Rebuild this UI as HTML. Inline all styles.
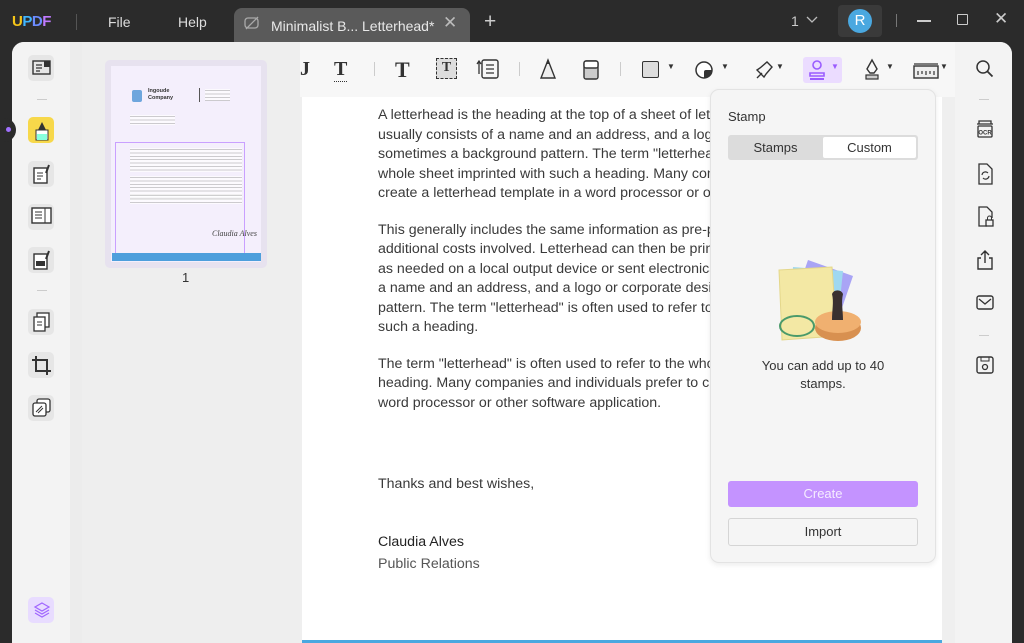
<!DOCTYPE html>
<html><head><meta charset="utf-8"><style>
*{margin:0;padding:0;box-sizing:border-box}
body{width:1024px;height:643px;overflow:hidden;background:#2b2b2b;font-family:"Liberation Sans","DejaVu Sans",sans-serif;position:relative}
.a{position:absolute}
.ib{position:absolute;width:26px;height:26px;border-radius:5px;background:#e6e6e6;left:28px}
.doc p{font-size:14.2px;color:#3a3a3a;line-height:19.5px;white-space:nowrap}
.rs svg{position:absolute;left:975px}
.tl{position:absolute;height:52px;background:repeating-linear-gradient(#fff 0 1px,#bbb 1px 2px,#fff 2px 3.4px);opacity:.7}
</style></head><body>
<div class="a" style="left:12px;top:13px;font-weight:bold;font-size:15px;letter-spacing:-.5px"><span style="color:#f5c518">U</span><span style="color:#3fb5ff">P</span><span style="color:#6c8cff">D</span><span style="color:#c07aff">F</span></div>
<div class="a" style="left:76px;top:14px;width:1px;height:16px;background:#555"></div>
<div class="a" style="left:108px;top:14px;color:#ddd;font-size:14px">File</div>
<div class="a" style="left:178px;top:14px;color:#ddd;font-size:14px">Help</div>
<div class="a" style="left:234px;top:8px;width:236px;height:34px;background:#5a5a5a;border-radius:8px 8px 0 0"></div>
<svg class="a" style="left:244px;top:16px" width="16" height="14"><rect x="1" y="2" width="13" height="10" rx="3" fill="none" stroke="#aaa" stroke-width="1.3"/><line x1="2" y1="13" x2="14" y2="1" stroke="#aaa" stroke-width="1.3"/></svg>
<div class="a" style="left:271px;top:18px;color:#e8e8e8;font-size:14px">Minimalist B... Letterhead*</div>
<div class="a" style="left:443px;top:13px;color:#bbb;font-size:17px">✕</div>
<div class="a" style="left:484px;top:10px;color:#ccc;font-size:21px;font-weight:300">+</div>
<div class="a" style="left:791px;top:13px;color:#ccc;font-size:14px">1</div>
<svg class="a" style="left:806px;top:16px" width="12" height="8"><path d="M1 1l5 5 5-5" fill="none" stroke="#bbb" stroke-width="1.3"/></svg>
<div class="a" style="left:838px;top:5px;width:44px;height:32px;background:#3a3a3a;border-radius:4px"></div>
<div class="a" style="left:848px;top:9px;width:24px;height:24px;border-radius:50%;background:#4aa8e0;color:#fff;font-size:15px;text-align:center;line-height:24px">R</div>
<div class="a" style="left:896px;top:14px;width:1px;height:13px;background:#777"></div>
<div class="a" style="left:917px;top:20px;width:14px;height:1.5px;background:#ccc"></div>
<div class="a" style="left:957px;top:14px;width:11px;height:11px;border:1.4px solid #ccc;border-radius:1px"></div>
<div class="a" style="left:994px;top:9px;color:#ccc;font-size:17px">✕</div>
<div class="a" style="left:12px;top:42px;width:1000px;height:601px;background:#efefef;border-radius:12px 12px 0 0;overflow:hidden">
 <div class="a" style="left:0;top:0;width:58px;height:601px;background:#f3f3f3"></div>
 <div class="a" style="left:58px;top:0;width:12px;height:601px;background:#ececec"></div>
 <div class="a" style="left:70px;top:0;width:218px;height:601px;background:#eeeeee"></div>
 <div class="a" style="left:288px;top:0;width:655px;height:55px;background:#f7f7f7"></div>
 <div class="a" style="left:290px;top:55px;width:640px;height:546px;background:#fff"></div>
 <div class="a" style="left:290px;top:598px;width:640px;height:3px;background:#4aa8e0"></div>
 <div class="a" style="left:943px;top:0;width:57px;height:601px;background:#f3f3f3"></div>
</div>
<div class="a" style="left:1012px;top:42px;width:12px;height:601px;background:#2b2b2b"></div>
<div class="a" style="left:0;top:118px;width:16px;height:24px;background:#2b2b2b;border-radius:0 12px 12px 0"></div>
<div class="a" style="left:6px;top:127px;width:5px;height:5px;border-radius:50%;background:#a070ff"></div>
<div class="ib" style="top:55px"></div>
<svg class="a" style="left:32px;top:60px" width="20" height="16"><rect x="1" y="1" width="17" height="13" fill="none" stroke="#333" stroke-width="1.4"/><path d="M4 5h6M4 8h6M4 11h4" stroke="#333" stroke-width="1.3"/><rect x="12" y="1" width="6" height="6" fill="#333"/></svg>
<div class="a" style="left:37px;top:99px;width:10px;height:1px;background:#ccc"></div>
<div class="ib" style="top:117px;background:#f7d84a"></div>
<svg class="a" style="left:33px;top:120px" width="18" height="22"><path d="M5 10l4-8 4 8z" fill="#333"/><rect x="3" y="10" width="12" height="10" fill="#fff" stroke="#333"/><rect x="4" y="14" width="10" height="6" fill="#8fd"/></svg>
<div class="ib" style="top:161px"></div>
<svg class="a" style="left:32px;top:163px" width="20" height="22"><rect x="2" y="5" width="13" height="15" fill="#fff" stroke="#333" stroke-width="1.4"/><path d="M5 10h6M5 13h6M5 16h4" stroke="#333"/><path d="M17 2l-3 8" stroke="#333" stroke-width="2"/></svg>
<div class="ib" style="top:204px"></div>
<svg class="a" style="left:31px;top:207px" width="22" height="18"><rect x="1" y="1" width="19" height="15" fill="#fff" stroke="#333" stroke-width="1.4"/><path d="M4 5h7M4 8h7M4 11h7M14 1v15" stroke="#333"/></svg>
<div class="ib" style="top:247px"></div>
<svg class="a" style="left:32px;top:249px" width="20" height="22"><rect x="2" y="5" width="13" height="15" fill="#fff" stroke="#333" stroke-width="1.4"/><rect x="4" y="12" width="9" height="5" fill="#333"/><path d="M17 2l-3 8" stroke="#333" stroke-width="2"/></svg>
<div class="a" style="left:37px;top:290px;width:10px;height:1px;background:#ccc"></div>
<div class="ib" style="top:309px"></div>
<svg class="a" style="left:32px;top:312px" width="20" height="20"><rect x="5" y="1" width="12" height="14" fill="#fff" stroke="#333" stroke-width="1.3"/><rect x="2" y="5" width="11" height="14" fill="#fff" stroke="#333" stroke-width="1.3"/><path d="M5 10h5M5 13h5" stroke="#333"/></svg>
<div class="ib" style="top:352px"></div>
<svg class="a" style="left:31px;top:355px" width="22" height="22"><path d="M5 1v15h15M1 5h15v15" fill="none" stroke="#333" stroke-width="2"/></svg>
<div class="ib" style="top:395px"></div>
<svg class="a" style="left:32px;top:398px" width="20" height="20"><rect x="5" y="1" width="13" height="13" rx="2" fill="#fff" stroke="#333" stroke-width="1.3"/><rect x="1" y="5" width="13" height="13" rx="2" fill="#fff" stroke="#333" stroke-width="1.3"/><path d="M4 14l6-6M6 15l5-5" stroke="#333"/></svg>
<div class="ib" style="top:597px;background:#e8dcff"></div>
<svg class="a" style="left:33px;top:601px" width="18" height="18"><path d="M9 2l7 4-7 4-7-4z M2 9l7 4 7-4 M2 12l7 4 7-4" fill="none" stroke="#a066ff" stroke-width="1.2"/></svg>
<div class="a" style="left:105px;top:60px;width:162px;height:208px;background:#e7e2ef;border-radius:5px"></div>
<div class="a" style="left:111px;top:66px;width:150px;height:196px;background:#f4effc"></div>
<div class="a" style="left:132px;top:90px;width:10px;height:12px;background:#6ea6dd;border-radius:2px"></div>
<div class="a" style="left:148px;top:88px;font-size:5.5px;font-weight:bold;color:#333;line-height:7px">Ingoude<br>Company</div>
<div class="a" style="left:199px;top:88px;width:1px;height:14px;background:#555"></div>
<div class="tl" style="left:205px;top:89px;width:25px;height:12px"></div>
<div class="tl" style="left:130px;top:115px;width:45px;height:10px"></div>
<div class="a" style="left:115px;top:142px;width:130px;height:118px;border:1px solid #c9a0ff"></div>
<div class="tl" style="left:130px;top:148px;width:112px;height:24px"></div>
<div class="tl" style="left:130px;top:176px;width:112px;height:24px"></div>
<div class="tl" style="left:130px;top:194px;width:112px;height:10px"></div>
<div class="a" style="left:212px;top:229px;font:italic 8px 'Liberation Serif',serif;color:#444">Claudia Alves</div>
<div class="a" style="left:112px;top:253px;width:149px;height:8px;background:#4d9fdc"></div>
<div class="a" style="left:182px;top:270px;font-size:13px;color:#333">1</div>
<div class="a" style="left:300px;top:58px;font:bold 20px 'Liberation Serif',serif;color:#333">J</div>
<div class="a" style="left:334px;top:58px;font:bold 20px 'Liberation Serif',serif;color:#333;border-bottom:1px dotted #333">T</div>
<div class="a" style="left:374px;top:62px;width:1px;height:14px;background:#ccc"></div>
<div class="a" style="left:395px;top:57px;font:bold 22px 'Liberation Serif',serif;color:#333">T</div>
<div class="a" style="left:436px;top:58px;width:21px;height:21px;border:1.4px dashed #333;background:#ddd;font:bold 14px 'Liberation Serif',serif;text-align:center;line-height:18px;color:#333">T</div>
<svg class="a" style="left:476px;top:58px" width="24" height="22"><rect x="6" y="2" width="16" height="18" rx="2" fill="none" stroke="#333" stroke-width="1.4"/><path d="M10 7h8M10 11h8M10 15h8M3 16V4M1 6l2-3 2 3" fill="none" stroke="#333" stroke-width="1.3"/></svg>
<div class="a" style="left:519px;top:62px;width:1px;height:14px;background:#ccc"></div>
<svg class="a" style="left:538px;top:58px" width="20" height="22"><path d="M10 2L3 20h14z" fill="#eee" stroke="#333" stroke-width="1.4"/><path d="M8 6h4l-2-4z" fill="#333"/></svg>
<svg class="a" style="left:582px;top:59px" width="18" height="22"><rect x="2" y="2" width="14" height="18" rx="2" fill="#ccc" stroke="#333" stroke-width="1.4"/><rect x="2" y="2" width="14" height="7" rx="2" fill="#fff" stroke="#333" stroke-width="1.4"/></svg>
<div class="a" style="left:620px;top:62px;width:1px;height:14px;background:#ccc"></div>
<div class="a" style="left:642px;top:61px;width:17px;height:17px;border:1.5px solid #333;background:#ddd;border-radius:2px"></div>
<svg class="a" style="left:694px;top:60px" width="40" height="20"><circle cx="10" cy="10" r="8" fill="#fff" stroke="#333" stroke-width="1.5"/><path d="M10 18a8 8 0 0 0 8-8h-6a2 2 0 0 0-2 2z" fill="#333"/></svg>
<svg class="a" style="left:752px;top:60px" width="24" height="20"><path d="M5 18l5-5M8 8l7-6 5 5-6 7-2 3-7-7z" fill="none" stroke="#333" stroke-width="1.4"/></svg>
<div class="a" style="left:803px;top:57px;width:39px;height:26px;background:#ebdcff;border-radius:3px"></div>
<svg class="a" style="left:806px;top:59px" width="22" height="22"><circle cx="11" cy="6" r="4" fill="none" stroke="#9a5cff" stroke-width="1.6"/><path d="M4 14h14v3H4z" fill="none" stroke="#9a5cff" stroke-width="1.6"/><rect x="4" y="19" width="14" height="2" fill="#9a5cff"/></svg>
<svg class="a" style="left:862px;top:58px" width="20" height="24"><path d="M10 2l-5 9 3 4h4l3-4z" fill="none" stroke="#333" stroke-width="1.4"/><rect x="4" y="17" width="12" height="4" fill="#ccc" stroke="#333" stroke-width="1.2"/></svg>
<svg class="a" style="left:913px;top:62px" width="26" height="18"><rect x="1" y="4" width="24" height="12" fill="#eee" stroke="#333" stroke-width="1.4"/><path d="M1 2h24M5 9v4M9 9v3M13 9v4M17 9v3M21 9v4" stroke="#333" stroke-width="1.2"/></svg>
<div class="a" style="left:667px;top:62px;font-size:8px;color:#333">▼</div>
<div class="a" style="left:721px;top:62px;font-size:8px;color:#333">▼</div>
<div class="a" style="left:776px;top:62px;font-size:8px;color:#333">▼</div>
<div class="a" style="left:831px;top:62px;font-size:8px;color:#9a5cff">▼</div>
<div class="a" style="left:886px;top:62px;font-size:8px;color:#333">▼</div>
<div class="a" style="left:940px;top:62px;font-size:8px;color:#333">▼</div>
<div class="a doc" style="left:378px;top:106px">
<p>A letterhead is the heading at the top of a sheet of letter</p>
<p>usually consists of a name and an address, and a logo or</p>
<p>sometimes a background pattern. The term "letterhead" is</p>
<p>whole sheet imprinted with such a heading. Many companie</p>
<p>create a letterhead template in a word processor or other</p>
<p style="margin-top:17px">This generally includes the same information as pre-printed</p>
<p>additional costs involved. Letterhead can then be printed o</p>
<p>as needed on a local output device or sent electronically</p>
<p>a name and an address, and a logo or corporate design,</p>
<p>pattern. The term "letterhead" is often used to refer to th</p>
<p>such a heading.</p>
<p style="margin-top:17px">The term "letterhead" is often used to refer to the whole sh</p>
<p>heading. Many companies and individuals prefer to create</p>
<p>word processor or other software application.</p>
<p style="margin-top:62px">Thanks and best wishes,</p>
<p style="margin-top:38px;color:#222">Claudia Alves</p>
<p style="margin-top:3px;color:#555">Public Relations</p>
</div>
<div class="a" style="left:710px;top:89px;width:226px;height:474px;background:#f5f5f5;border:1px solid #e3e3e3;border-radius:9px;box-shadow:0 2px 6px rgba(0,0,0,.08)"></div>
<div class="a" style="left:728px;top:109px;font-size:13px;color:#333">Stamp</div>
<div class="a" style="left:728px;top:135px;width:190px;height:25px;background:#dcdcdc;border-radius:3px"></div>
<div class="a" style="left:823px;top:137px;width:93px;height:21px;background:#fff;border-radius:2px"></div>
<div class="a" style="left:728px;top:140px;width:95px;text-align:center;font-size:13px;color:#333">Stamps</div>
<div class="a" style="left:823px;top:140px;width:93px;text-align:center;font-size:13px;color:#333">Custom</div>
<svg class="a" style="left:775px;top:248px" width="105" height="102">
<path d="M33 12l45 16-20 58-45-16z" fill="#a9a4f5"/>
<path d="M18 19l50 4-6 58-47-4z" fill="#9fd8f0"/>
<path d="M4 22l53-3 5 69-55 4z" fill="#f3e8a4" stroke="#e4d78a"/>
<ellipse cx="22" cy="78" rx="17" ry="10" fill="none" stroke="#4a9a6a" stroke-width="2"/>
<ellipse cx="63" cy="80" rx="23" ry="13" fill="#d89050"/>
<ellipse cx="63" cy="74" rx="23" ry="11" fill="#f0b070"/>
<path d="M57 72c0-10 2-18 0-26a6 6 0 0 1 11 0c-2 8 0 16 0 26z" fill="#3a3030"/>
</svg>
<div class="a" style="left:728px;top:357px;width:190px;text-align:center;font-size:13px;color:#333;line-height:18px">You can add up to 40<br>stamps.</div>
<div class="a" style="left:728px;top:481px;width:190px;height:26px;background:#c493ff;border-radius:3px;color:#f5ecff;font-size:13px;text-align:center;line-height:26px">Create</div>
<div class="a" style="left:728px;top:518px;width:190px;height:28px;border:1px solid #d5d5d5;border-radius:3px;background:#f5f5f5;color:#333;font-size:13px;text-align:center;line-height:26px">Import</div>
<div class="rs">
<svg style="top:59px" width="20" height="20"><circle cx="8" cy="8" r="6" fill="none" stroke="#333" stroke-width="1.5"/><path d="M12.5 12.5l5 5" stroke="#333" stroke-width="1.8"/></svg>
<div class="a" style="left:979px;top:99px;width:10px;height:1px;background:#ccc"></div>
<svg style="top:119px" width="20" height="20"><path d="M2 5h16M4 5V2h12v3" fill="none" stroke="#333" stroke-width="1.3"/><rect x="3" y="7" width="14" height="11" rx="1" fill="none" stroke="#333" stroke-width="1.3"/><text x="10" y="15.5" font-size="6" text-anchor="middle" font-family="Liberation Sans" font-weight="bold" fill="#333">OCR</text></svg>
<svg style="top:163px" width="20" height="22"><path d="M4 1h8l5 5v15H4z" fill="none" stroke="#333" stroke-width="1.3"/><path d="M7 12a3.5 3.5 0 0 1 6-2M14 13a3.5 3.5 0 0 1-6 2" fill="none" stroke="#333" stroke-width="1.2"/></svg>
<svg style="top:206px" width="20" height="22"><path d="M12 20H4V1h8l5 5v6" fill="none" stroke="#333" stroke-width="1.3"/><rect x="11" y="14" width="7" height="6" fill="none" stroke="#333" stroke-width="1.3"/><path d="M12.5 14v-2a2 2 0 0 1 4 0v2" fill="none" stroke="#333"/></svg>
<svg style="top:249px" width="20" height="22"><path d="M6 9H3v11h14V9h-3M10 14V2M6 6l4-4 4 4" fill="none" stroke="#333" stroke-width="1.4"/></svg>
<svg style="top:294px" width="20" height="18"><rect x="2" y="2" width="16" height="13" rx="2" fill="none" stroke="#333" stroke-width="1.4"/><path d="M4 5l6 5 6-5" fill="none" stroke="#333" stroke-width="1.3"/></svg>
<div class="a" style="left:979px;top:335px;width:10px;height:1px;background:#ccc"></div>
<svg style="top:355px" width="20" height="20"><rect x="2" y="2" width="16" height="16" rx="2" fill="none" stroke="#333" stroke-width="1.4"/><rect x="6" y="2" width="8" height="4" fill="none" stroke="#333"/><circle cx="10" cy="12" r="2.5" fill="none" stroke="#333" stroke-width="1.3"/></svg>
</div>
</body></html>
